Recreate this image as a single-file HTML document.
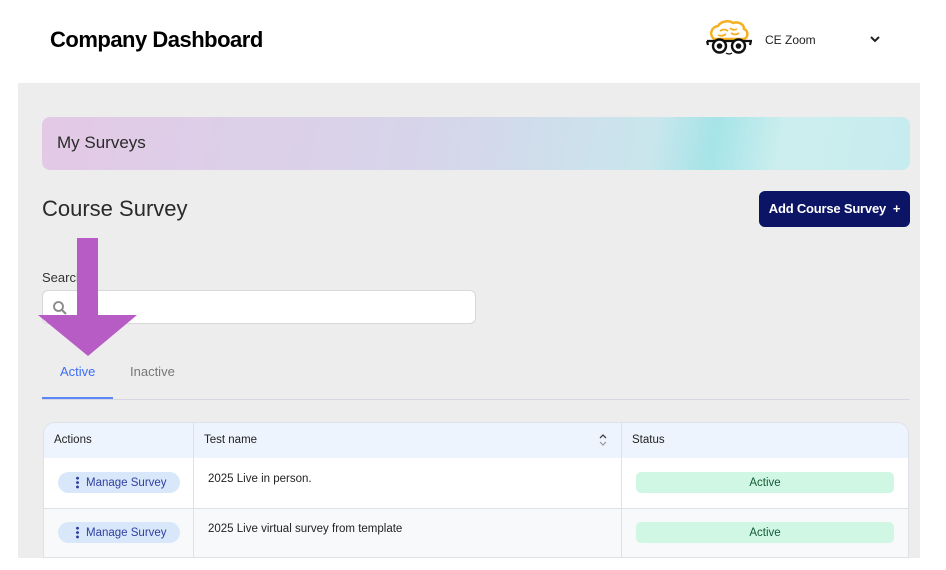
<!DOCTYPE html>
<html><head><meta charset="utf-8"><style>
*{box-sizing:border-box;margin:0;padding:0}
body{width:946px;height:570px;background:#fff;font-family:"Liberation Sans",sans-serif;position:relative;overflow:hidden;color:#222}
.abs{position:absolute}
.gray{left:18px;top:83px;width:902px;height:475px;background:#ededed}
h1{position:absolute;left:50px;top:27px;font-size:22px;font-weight:bold;color:#000;letter-spacing:-0.5px}
.banner{left:42px;top:117px;width:868px;height:53px;border-radius:8px;background:linear-gradient(100deg,#e3c9e6 0%,#d6d5ea 45%,#c9e6ec 70%,#a5e4e8 77%,#cdeeee 85%,#c6ecef 100%)}
.btn{left:759px;top:191px;width:151px;height:36px;border-radius:6px;background:#0c1466;color:#fff;font-weight:bold;font-size:13px;line-height:36px;text-align:center;letter-spacing:-0.2px}
.search{left:42px;top:290px;width:434px;height:34px;background:#fff;border:1px solid #d7d7dd;border-radius:6px}
.tbl{left:43px;top:422px;width:866px;height:136px;background:#fff;border-radius:12px 12px 0 0;overflow:hidden;border:1px solid #dfe1e8}
.pill{position:absolute;left:14px;width:122px;height:21px;border-radius:11px;background:#d9e7fb;color:#2f3f9f;font-size:11.5px;line-height:22px;padding-left:28px}
.dots{position:absolute;left:18px;top:4px;width:3px;height:13px;background:radial-gradient(circle,#2b3d9c 1.3px,transparent 1.6px) 0 0/3px 4.4px}
.st{position:absolute;left:592px;width:258px;height:21px;border-radius:5px;background:#d0f7e4;color:#135c35;font-size:11.5px;line-height:22px;text-align:center}
.cell{position:absolute;font-size:11.5px;color:#222}
</style></head><body>
<h1>Company Dashboard</h1>
<svg class="abs" style="left:706px;top:20px" width="46" height="36" viewBox="0 0 46 36">
<path d="M8 19 C3 15 5 7 12 6 C15 1 23 0 27 3 C32 1 38 4 38 9 C43 11 42 18 38 19 Z" fill="#fff" stroke="#f5b021" stroke-width="2.5"/>
<path d="M14 11 q4 -3 8 0 M24 8 q3 3 7 1 M12 15 q4 2 8 -1 M25 13 q4 3 8 0" stroke="#f5b021" stroke-width="1.8" fill="none"/>
<path d="M1 21 L45 21 L44 25 M1 21 L2 25" stroke="#111" stroke-width="2.2" fill="none"/>
<circle cx="13.5" cy="26" r="6.5" fill="#fff" stroke="#111" stroke-width="2.4"/>
<circle cx="32.5" cy="26" r="6.5" fill="#fff" stroke="#111" stroke-width="2.4"/>
<circle cx="13.5" cy="26" r="2.8" fill="#111"/><circle cx="32.5" cy="26" r="2.8" fill="#111"/>
<path d="M20 33 q3 2 6 0" stroke="#111" stroke-width="1.3" fill="none"/>
</svg>
<div class="abs" style="left:765px;top:33px;font-size:12px;color:#222">CE Zoom</div>
<svg class="abs" style="left:869px;top:35px" width="12" height="9" viewBox="0 0 12 9"><path d="M2 2 L6 6 L10 2" stroke="#222" stroke-width="2" fill="none"/></svg>
<div class="abs gray"></div>
<div class="abs banner"></div>
<div class="abs" style="left:57px;top:133px;font-size:17px;color:#2a2a2a">My Surveys</div>
<div class="abs" style="left:42px;top:196px;font-size:22px;color:#2a2a2a">Course Survey</div>
<div class="abs btn">Add Course Survey &nbsp;+</div>
<div class="abs" style="left:42px;top:270px;font-size:13px;color:#333">Search</div>
<div class="abs search"></div>
<svg class="abs" style="left:52px;top:300px" width="16" height="16" viewBox="0 0 16 16"><circle cx="6.5" cy="6.5" r="4.5" stroke="#888" stroke-width="1.8" fill="none"/><path d="M10 10 L14 14" stroke="#888" stroke-width="2"/></svg>
<div class="abs" style="left:60px;top:364px;font-size:13px;color:#3d6ef5">Active</div>
<div class="abs" style="left:130px;top:364px;font-size:13px;color:#777">Inactive</div>
<div class="abs" style="left:42px;top:399px;width:868px;height:1px;background:#d5d8e0"></div>
<div class="abs" style="left:42px;top:397px;width:71px;height:2px;background:#5b86f5"></div>
<svg class="abs" style="left:38px;top:238px" width="100" height="120" viewBox="0 0 100 120"><path d="M39 0 H60 V77 H99 L50 118 L0 77 H39 Z" fill="#b65cc4"/></svg>
<div class="abs tbl">
<div style="position:absolute;left:0;top:0;width:866px;height:35px;background:#eef4fd"></div>
<div style="position:absolute;left:0;top:85px;width:866px;height:51px;background:#f8f9fb;border-top:1px solid #dfe1e8"></div>
<div style="position:absolute;left:149px;top:0;width:1px;height:136px;background:#dfe1e8"></div>
<div style="position:absolute;left:577px;top:0;width:1px;height:136px;background:#dfe1e8"></div>
<div class="cell" style="left:10px;top:11px">Actions</div>
<div class="cell" style="left:160px;top:11px">Test name</div>
<div class="cell" style="left:588px;top:11px">Status</div>
<svg style="position:absolute;left:554px;top:10px" width="10" height="14" viewBox="0 0 10 14"><path d="M2 5 L5 2 L8 5" stroke="#444" stroke-width="1.3" fill="none"/><path d="M2 9 L5 12 L8 9" stroke="#999" stroke-width="1.2" fill="none"/></svg>
<div class="pill" style="top:49px"><span class="dots"></span>Manage Survey</div>
<div class="cell" style="left:164px;top:50px">2025 Live in person.</div>
<div class="st" style="top:49px">Active</div>
<div class="pill" style="top:99px"><span class="dots"></span>Manage Survey</div>
<div class="cell" style="left:164px;top:100px">2025 Live virtual survey from template</div>
<div class="st" style="top:99px">Active</div>
</div>
</body></html>
